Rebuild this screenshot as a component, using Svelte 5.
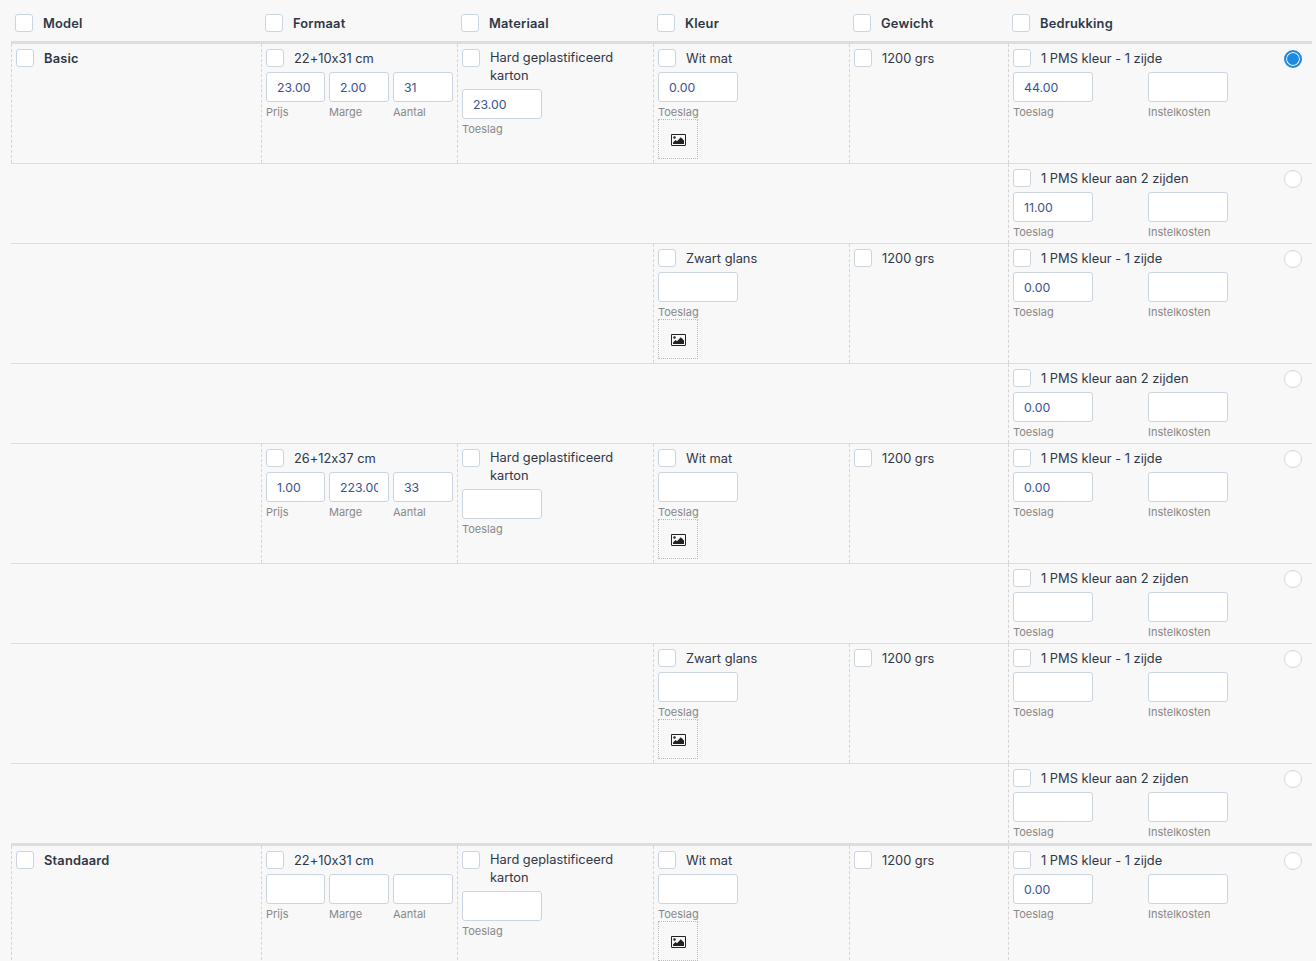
<script>
	const heads = ['Model', 'Formaat', 'Materiaal', 'Kleur', 'Gewicht', 'Bedrukking'];

	const mat = 'Hard geplastificeerd karton';
	const one = '1 PMS kleur - 1 zijde';
	const two = '1 PMS kleur aan 2 zijden';

	const rows = [
		{
			model: 'Basic',
			format: { name: '22+10x31 cm', prijs: '23.00', marge: '2.00', aantal: '31' },
			material: { name: mat, toeslag: '23.00' },
			color: { name: 'Wit mat', toeslag: '0.00' },
			print: { name: one, toeslag: '44.00' },
			selected: true
		},
		{ print: { name: two, toeslag: '11.00' } },
		{ color: { name: 'Zwart glans', toeslag: '' }, print: { name: one, toeslag: '0.00' } },
		{ print: { name: two, toeslag: '0.00' } },
		{
			format: { name: '26+12x37 cm', prijs: '1.00', marge: '223.00', aantal: '33' },
			material: { name: mat, toeslag: '' },
			color: { name: 'Wit mat', toeslag: '' },
			print: { name: one, toeslag: '0.00' }
		},
		{ print: { name: two, toeslag: '' } },
		{ color: { name: 'Zwart glans', toeslag: '' }, print: { name: one, toeslag: '' } },
		{ print: { name: two, toeslag: '' } },
		{
			model: 'Standaard',
			format: { name: '22+10x31 cm', prijs: '', marge: '', aantal: '' },
			material: { name: mat, toeslag: '' },
			color: { name: 'Wit mat', toeslag: '' },
			print: { name: one, toeslag: '0.00' }
		}
	];
</script>

{#snippet field(label, value, cls)}
	<label class="field {cls}">
		<input type="text" {value} />
		<span>{label}</span>
	</label>
{/snippet}

<div class="grid-table">
	<div class="row head">
		{#each heads as head}
			<div class="th">
				<input class="check" type="checkbox" />
				<span>{head}</span>
			</div>
		{/each}
	</div>

	{#each rows as row}
		<div class="row" class:major={row.model}>
			{#if row.model}
				<div class="cell first">
					<div class="opt">
						<input class="check" type="checkbox" />
						<strong>{row.model}</strong>
					</div>
				</div>
			{:else}
				<div></div>
			{/if}

			{#if row.format}
				<div class="cell">
					<div class="opt">
						<input class="check" type="checkbox" />
						<span>{row.format.name}</span>
					</div>
					<div class="fields">
						{@render field('Prijs', row.format.prijs, 'small')}
						{@render field('Marge', row.format.marge, 'small')}
						{@render field('Aantal', row.format.aantal, 'small')}
					</div>
				</div>
			{:else}
				<div></div>
			{/if}

			{#if row.material}
				<div class="cell">
					<div class="opt two-line">
						<input class="check" type="checkbox" />
						<span>{row.material.name}</span>
					</div>
					<div class="fields">
						{@render field('Toeslag', row.material.toeslag, 'wide')}
					</div>
				</div>
			{:else}
				<div></div>
			{/if}

			{#if row.color}
				<div class="cell">
					<div class="opt">
						<input class="check" type="checkbox" />
						<span>{row.color.name}</span>
					</div>
					<div class="fields">
						{@render field('Toeslag', row.color.toeslag, 'wide')}
					</div>
					<div class="picture">
						<svg viewBox="0 0 15 12" width="15" height="12" aria-hidden="true">
							<path
								fill="#222"
								fill-rule="evenodd"
								d="M1.2 0h12.6C14.5 0 15 .5 15 1.2v9.600c0 .7-.5 1.200-1.200 1.200H1.200C.5 12 0 11.500 0 10.800V1.200C0 .5.500 0 1.200 0zM1 1v10h13V1zM3.500 2.200a1.300 1.300 0 1 1 0 2.600 1.300 1.300 0 0 1 0-2.600zM2 10V8.500L4.500 6 6 7.300 9.800 3.200 13 6.500V10z"
							/>
						</svg>
					</div>
				</div>
				<div class="cell">
					<div class="opt">
						<input class="check" type="checkbox" />
						<span>1200 grs</span>
					</div>
				</div>
			{:else}
				<div></div>
				<div></div>
			{/if}

			<div class="cell print">
				<div class="opt">
					<input class="check" type="checkbox" />
					<span>{row.print.name}</span>
					<span class="radio" class:on={row.selected}></span>
				</div>
				<div class="fields spaced">
					{@render field('Toeslag', row.print.toeslag, 'wide')}
					{@render field('Instelkosten', '', 'wide')}
				</div>
			</div>
		</div>
	{/each}
</div>

<style>
	:global(body) {
		background: #f8f8f8;
		overflow: hidden;
	}

	.grid-table {
		margin-left: 11px;
		width: 1301px;
		font-family: Inter, 'Liberation Sans', sans-serif;
		font-size: 12.85px;
		font-feature-settings: 'calt' 0;
		line-height: 18px;
		color: #2d3748;
	}

	.row {
		display: grid;
		grid-template-columns: 250px 196px 196px 196px 159px 304px;
		border-top: 1px solid #ddd;
	}

	.row.major {
		border-top: 3px solid #ddd;
	}

	.row.head {
		border-top: 0;
		height: 41px;
	}

	.row.head + .row {
		border-top: 3px solid #ddd;
	}

	.th {
		display: flex;
		align-items: center;
		gap: 10px;
		padding: 5px 0 0 4px;
		font-weight: 600;
		letter-spacing: 0.2px;
	}

	.th span {
		padding-top: 2px;
	}

	.cell {
		border-left: 1px dashed #d4d4d4;
		padding: 5px 0 5px 4px;
		min-width: 0;
	}

	.opt {
		display: flex;
		gap: 10px;
		padding-right: 10px;
		margin-bottom: 5px;
	}

	.opt.two-line {
		margin-bottom: 4px;
	}

	.opt strong {
		margin: 1px 0 -1px;
		font-weight: 600;
		letter-spacing: 0.2px;
	}

	.opt span:not(.radio) {
		flex: 1;
		min-width: 0;
		margin: 1px 0 -1px;
	}

	.opt.two-line span:not(.radio) {
		margin: 0;
	}

	.check {
		appearance: none;
		flex: none;
		width: 18px;
		height: 18px;
		margin: 0;
		background: #fff;
		border: 1px solid #cbd5e0;
		border-radius: 3px;
	}

	.radio {
		flex: none;
		box-sizing: border-box;
		width: 18px;
		height: 18px;
		margin: 1px 0 -1px;
		background: #fff;
		border: 1px solid #d3d8de;
		border-radius: 50%;
	}

	.radio.on {
		background: #2189dd;
		border: 2px solid #2189dd;
		box-shadow: inset 0 0 0 1px #fff;
	}

	.fields {
		display: flex;
		gap: 4px;
	}

	.fields.spaced {
		gap: 55px;
	}

	.field {
		display: block;
	}

	.field input {
		display: block;
		box-sizing: border-box;
		height: 30px;
		margin: 0;
		padding: 0 10px;
		background: #fff;
		border: 1px solid #cbd5e0;
		border-radius: 3px;
		outline: 0;
		font: inherit;
		font-size: 12.3px;
		color: #3c5391;
	}

	.field.small input {
		width: 60px;
	}

	.field.small:first-child input {
		width: 59px;
	}

	.field.wide input {
		width: 80px;
	}

	.field span {
		display: block;
		height: 16px;
		font-size: 11px;
		line-height: 20px;
		color: #888;
	}

	.picture {
		display: flex;
		align-items: center;
		justify-content: center;
		box-sizing: border-box;
		width: 40px;
		height: 40px;
		margin: 1px 0 -1px;
		padding-top: 2px;
		border: 1px dotted #bbb;
	}
</style>
